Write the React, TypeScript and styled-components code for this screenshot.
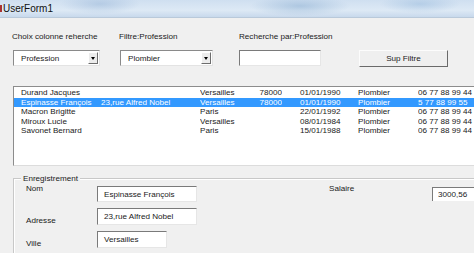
import styled, { createGlobalStyle } from "styled-components";

const GlobalStyle = createGlobalStyle`
  html, body {
    margin: 0;
    padding: 0;
    background: #f0f0f0;
  }
  body {
    font-family: "Liberation Sans", Arial, sans-serif;
    font-size: 8.1px;
    color: #1a1a1a;
  }
`;

interface IRow {
  name: string;
  address: string;
  city: string;
  zip: string;
  date: string;
  job: string;
  phone: string;
  selected?: boolean;
}

const rows: IRow[] = [
  { name: "Durand Jacques", address: "", city: "Versailles", zip: "78000", date: "01/01/1990", job: "Plombier", phone: "06 77 88 99 44" },
  { name: "Espinasse François", address: "23,rue Alfred Nobel", city: "Versailles", zip: "78000", date: "01/01/1990", job: "Plombier", phone: "5 77 88 99 55", selected: true },
  { name: "Macron Brigitte", address: "", city: "Paris", zip: "", date: "22/01/1992", job: "Plombier", phone: "06 77 88 99 44" },
  { name: "Miroux Lucie", address: "", city: "Versailles", zip: "", date: "08/01/1984", job: "Plombier", phone: "06 77 88 99 44" },
  { name: "Savonet Bernard", address: "", city: "Paris", zip: "", date: "15/01/1988", job: "Plombier", phone: "06 77 88 99 44" },
];

function App() {
  return (
    <Window>
      <GlobalStyle />
      <TitleBar>
        <TitleIcon />
        <Title>UserForm1</Title>
      </TitleBar>
      <Body>
        <TopRow>
          <Group $width={107}>
            <Label>Choix colonne reherche</Label>
            <Combo $width={87}>
              <ComboText>Profession</ComboText>
              <DropButton>
                <Arrow />
              </DropButton>
            </Combo>
          </Group>
          <Group $width={120}>
            <Label>Filtre:Profession</Label>
            <Combo $width={93}>
              <ComboText>Plombier</ComboText>
              <DropButton>
                <Arrow />
              </DropButton>
            </Combo>
          </Group>
          <Group $width={120}>
            <Label>Recherche par:Profession</Label>
            <TextBox $width={82} />
          </Group>
          <Group $width={90}>
            <Label>&nbsp;</Label>
            <Button>Sup Filtre</Button>
          </Group>
        </TopRow>

        <ListBox>
          {rows.map(r => (
            <ListRow key={r.name} $selected={r.selected}>
              <Cell>{r.name}</Cell>
              <Cell>{r.address}</Cell>
              <Cell>{r.city}</Cell>
              <Cell $right>{r.zip}</Cell>
              <Cell $pad={18}>{r.date}</Cell>
              <Cell>{r.job}</Cell>
              <Cell>{r.phone}</Cell>
            </ListRow>
          ))}
        </ListBox>

        <Frame>
          <Legend>Enregistrement</Legend>
          <FrameGrid>
            <FieldLabel $align="start">Nom</FieldLabel>
            <TextBox $width={100} $height={16}>Espinasse François</TextBox>
            <SalaryLabel>Salaire</SalaryLabel>
            <SalaryBox>3000,56</SalaryBox>

            <FieldLabel $align="end">Adresse</FieldLabel>
            <TextBox $width={100} $height={17}>23,rue Alfred Nobel</TextBox>
            <Spacer />
            <Spacer />

            <FieldLabel $align="end">Ville</FieldLabel>
            <TextBox $width={70} $height={17}>Versailles</TextBox>
            <Spacer />
            <Spacer />
          </FrameGrid>
        </Frame>
      </Body>
    </Window>
  );
}

const Window = styled.div`
  width: 474px;
  height: 253px;
  overflow: hidden;
  background: #f0f0f0;
`;

const TitleBar = styled.div`
  height: 17px;
  display: flex;
  align-items: center;
  background:
    radial-gradient(ellipse 40px 10px at 100px 4px, rgba(150, 180, 215, 0.5), transparent),
    radial-gradient(ellipse 50px 10px at 300px 6px, rgba(140, 175, 210, 0.55), transparent),
    radial-gradient(ellipse 40px 9px at 420px 4px, rgba(150, 185, 220, 0.5), transparent),
    linear-gradient(180deg, #cfdff0 0%, #dde9f5 60%, #c8d9ec 100%);
  border-bottom: 1px solid #b9c9da;
`;

const TitleIcon = styled.div`
  width: 2px;
  height: 7px;
  background: #a33;
`;

const Title = styled.span`
  font-size: 10px;
  margin-left: 1px;
  color: #111;
`;

const Body = styled.div`
  padding: 13px 0 0 12px;
`;

const TopRow = styled.div`
  display: flex;
`;

const Group = styled.div<{ $width: number }>`
  width: ${p => p.$width}px;
  display: flex;
  flex-direction: column;
  gap: 8px;
`;

const Label = styled.div`
  height: 11px;
  line-height: 11px;
  white-space: nowrap;
`;

const Combo = styled.div<{ $width: number }>`
  width: ${p => p.$width}px;
  height: 16px;
  box-sizing: border-box;
  margin-left: 1px;
  background: #fff;
  border-top: 1px solid #8a8a8a;
  border-left: 1px solid #8a8a8a;
  border-right: 1px solid #e3e3e3;
  border-bottom: 1px solid #e3e3e3;
  display: flex;
  align-items: center;
  justify-content: space-between;
  padding: 0 1px 0 7px;
`;

const ComboText = styled.span`
  white-space: nowrap;
`;

const DropButton = styled.div`
  width: 10px;
  height: 12px;
  box-sizing: border-box;
  background: #ececec;
  border-top: 1px solid #fff;
  border-left: 1px solid #fff;
  border-right: 1px solid #6d6d6d;
  border-bottom: 1px solid #6d6d6d;
  display: flex;
  align-items: center;
  justify-content: center;
`;

const Arrow = styled.div`
  width: 0;
  height: 0;
  border-left: 2.5px solid transparent;
  border-right: 2.5px solid transparent;
  border-top: 3px solid #000;
`;

const TextBox = styled.div<{ $width: number; $height?: number }>`
  width: ${p => p.$width}px;
  height: ${p => p.$height ?? 16}px;
  box-sizing: border-box;
  background: #fff;
  border-top: 1px solid #7a7a7a;
  border-left: 1px solid #7a7a7a;
  border-right: 1px solid #e6e6e6;
  border-bottom: 1px solid #e6e6e6;
  padding: 0 6px;
  display: flex;
  align-items: center;
  white-space: nowrap;
`;

const Button = styled.div`
  width: 89px;
  height: 17px;
  box-sizing: border-box;
  background: #efefef;
  border-top: 1px solid #fcfcfc;
  border-left: 1px solid #fcfcfc;
  border-right: 1px solid #6a6a6a;
  border-bottom: 1px solid #6a6a6a;
  display: flex;
  align-items: center;
  justify-content: center;
`;

const ListBox = styled.div`
  margin-top: 19px;
  margin-left: 1px;
  width: 470px;
  height: 80px;
  box-sizing: border-box;
  background: #fff;
  border-top: 1px solid #8c8c8c;
  border-left: 1px solid #8c8c8c;
  border-bottom: 1px solid #dcdcdc;
  padding: 1px 0 0 0;
`;

const ListRow = styled.div<{ $selected?: boolean }>`
  display: grid;
  grid-template-columns: 80px 99px 58px 24px 76px 60px auto;
  height: 9.6px;
  line-height: 9.6px;
  padding-left: 7px;
  white-space: nowrap;
  background: ${p => (p.$selected ? "#3399ff" : "transparent")};
  color: ${p => (p.$selected ? "#fff" : "#1a1a1a")};
`;

const Cell = styled.span<{ $right?: boolean; $pad?: number }>`
  text-align: ${p => (p.$right ? "right" : "left")};
  padding-left: ${p => p.$pad ?? 0}px;
  overflow: hidden;
`;

const Frame = styled.div`
  position: relative;
  margin-top: 12px;
  margin-left: 1px;
  width: 470px;
  height: 90px;
  box-sizing: border-box;
  border-top: 1px solid #c8c8c8;
  border-left: 1px solid #c8c8c8;
  box-shadow: inset 1px 1px 0 #fff;
  padding: 7px 0 0 12px;
`;

const Legend = styled.span`
  position: absolute;
  top: -6px;
  left: 7px;
  padding: 0 2px;
  background: #f0f0f0;
  line-height: 11px;
`;

const FrameGrid = styled.div`
  display: grid;
  grid-template-columns: 71px 232px 103px auto;
  grid-template-rows: 16px 17px 17px;
  row-gap: 6px;
`;

const FieldLabel = styled.div<{ $align: "start" | "end" }>`
  align-self: ${p => p.$align};
  line-height: 10px;
  margin-top: ${p => (p.$align === "start" ? "-2px" : "0")};
  margin-bottom: ${p => (p.$align === "end" ? "-1px" : "0")};
`;

const SalaryLabel = styled.div`
  line-height: 10px;
  align-self: start;
  margin-top: -2px;
`;

const SalaryBox = styled.div`
  width: 50px;
  height: 14px;
  margin-top: 1px;
  box-sizing: border-box;
  background: #fff;
  border-top: 1px solid #7a7a7a;
  border-left: 1px solid #7a7a7a;
  padding: 0 5px;
  display: flex;
  align-items: center;
`;

const Spacer = styled.div``;

export default App;
